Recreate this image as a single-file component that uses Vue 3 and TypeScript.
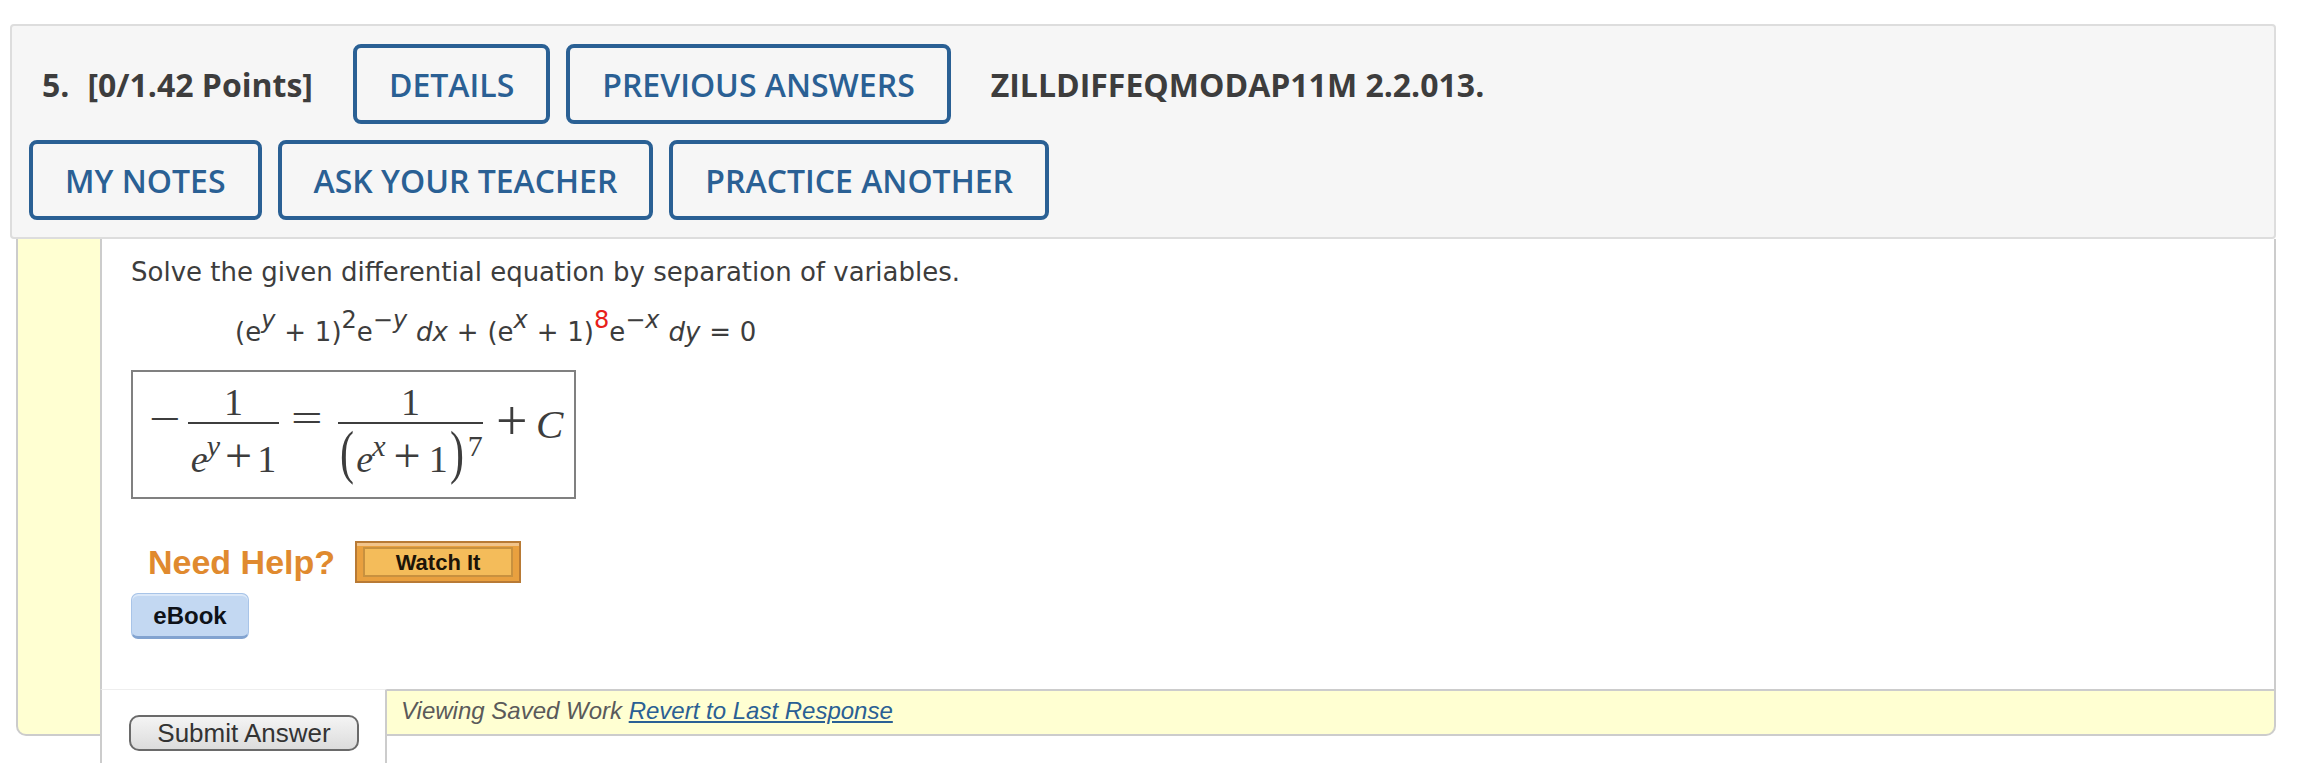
<script setup lang="ts">
const topButtons: string[] = ['DETAILS', 'PREVIOUS ANSWERS']
const bottomButtons: string[] = ['MY NOTES', 'ASK YOUR TEACHER', 'PRACTICE ANOTHER']
</script>

<template>
  <div class="page">
    <header class="head">
      <div class="row">
        <span class="num">5.</span>
        <span class="pts">[0/1.42 Points]</span>
        <button v-for="b in topButtons" :key="b" class="hbtn">{{ b }}</button>
        <span class="code">ZILLDIFFEQMODAP11M 2.2.013.</span>
      </div>
      <div class="row">
        <button v-for="b in bottomButtons" :key="b" class="hbtn">{{ b }}</button>
      </div>
    </header>

    <section class="panel">
      <div class="gutter"></div>
      <div class="main">
        <div class="content">
          <p class="question">Solve the given differential equation by separation of variables.</p>
          <p class="equation">
            (e<sup><i>y</i></sup> + 1)<sup>2</sup>e<sup>−<i>y</i></sup>&nbsp;<i>dx</i> + (e<sup><i>x</i></sup> + 1)<sup class="red">8</sup>e<sup>−<i>x</i></sup>&nbsp;<i>dy</i> = 0
          </p>
          <div class="answer">
            <span class="op minus">−</span>
            <span class="frac f1">
              <span class="n">1</span>
              <span class="d"><i>e</i><sup><i>y</i></sup><span class="plus">+</span>1</span>
            </span>
            <span class="op eq">=</span>
            <span class="frac f2">
              <span class="n">1</span>
              <span class="d"><span class="paren">(</span><i>e</i><sup><i>x</i></sup><span class="plus">+</span>1<span class="paren">)</span><sup class="seven">7</sup></span>
            </span>
            <span class="op plus2">+</span>
            <i class="c">C</i>
          </div>
          <div class="help">
            <span class="need">Need Help?</span>
            <span class="watch"><span class="watch-in">Watch It</span></span>
          </div>
          <span class="ebook">eBook</span>
        </div>
        <div class="foot">
          <div class="cell"><button class="submit">Submit Answer</button></div>
          <div class="status">Viewing Saved Work <a class="link" href="#">Revert to Last Response</a></div>
        </div>
      </div>
    </section>
  </div>
</template>

<style>
html, body { margin: 0; background: #fff; overflow: hidden; }
</style>

<style scoped>
.page {
  height: 764px;
  box-sizing: border-box;
  padding: 24px 32px 0 10px;
  overflow: hidden;
}
.head {
  box-sizing: border-box;
  height: 215px;
  border: 2px solid #ddd;
  border-radius: 4px;
  background: #f6f6f6;
  padding: 18px 17px 0;
  display: flex;
  flex-direction: column;
  gap: 16px;
  font-family: "Open Sans", sans-serif;
}
.row { display: flex; align-items: center; height: 80px; }
.num, .pts, .code { font-weight: 700; font-size: 32px; color: #3d3d3d; white-space: nowrap; }
.num { margin-left: 13px; }
.pts { margin-left: 18px; margin-right: 40px; }
.code { margin-left: 24px; }
.hbtn {
  box-sizing: border-box;
  height: 80px;
  border: 4px solid #2a6094;
  border-radius: 8px;
  background: #f6f6f6;
  color: #2a6094;
  font-family: "Open Sans", sans-serif;
  font-weight: 600;
  font-size: 32px;
  padding: 0 32px;
  margin-right: 16px;
  white-space: nowrap;
}
.panel {
  box-sizing: border-box;
  margin-left: 6px;
  height: 497px;
  display: flex;
  border: 2px solid #ccc;
  border-top: 0;
  border-radius: 0 0 10px 10px;
  background: #ffffd2;
}
.gutter { width: 82px; flex: none; }
.main { flex: 1; display: flex; flex-direction: column; min-width: 0; }
.content {
  flex: 1;
  background: #fff;
  border-left: 2px solid #ccc;
  padding-left: 29px;
  font-family: "DejaVu Sans", sans-serif;
  color: #3d3d3d;
}
.question { margin: 0; padding-top: 16px; font-size: 26px; line-height: 34px; white-space: nowrap; }
.equation {
  margin: 21px 0 0;
  padding-left: 104px;
  font-size: 26px;
  line-height: 44px;
  height: 44px;
  white-space: nowrap;
  word-spacing: 0.6px;
}
.equation sup { font-size: 24px; line-height: 0; vertical-align: 13px; }
.equation .red { color: #e8201a; }
.answer {
  box-sizing: border-box;
  margin-top: 16px;
  width: 445px;
  height: 129px;
  border: 2px solid #808080;
  display: flex;
  align-items: flex-start;
  font-family: "Liberation Serif", serif;
  font-size: 38px;
  color: #3d3d3d;
  padding-left: 16px;
}
.op { font-size: 40px; line-height: 40px; margin-top: 27px; transform-origin: left center; }
.minus { width: 39px; transform: scaleX(1.4); }
.frac { display: flex; flex-direction: column; align-items: center; }
.n {
  display: block;
  width: 100%;
  text-align: center;
  line-height: 60px;
  height: 50px;
  border-bottom: 2px solid #3d3d3d;
}
.d { display: flex; align-items: baseline; line-height: 70px; height: 70px; white-space: nowrap; }
.d sup { font-size: 30px; line-height: 0; position: relative; top: -16px; margin-left: -1px; }
.plus { margin: 0 5px; font-size: 48px; line-height: 0; }
.f1 { width: 91px; }
.eq { width: 47px; margin-left: 12px; transform: scaleX(1.4); }
.f2 { width: 145px; }
.f2 .plus { margin: 0 8px; }
.paren { font-size: 60px; line-height: 0; transform: scaleX(.7); margin: 0 -1px; }
.d .seven { margin-left: 2px; }
.plus2 { margin-left: 13px; margin-top: 29px; width: 40px; font-size: 56px; }
.c { font-size: 41px; line-height: 40px; margin-top: 32px; }
.help { display: flex; align-items: center; margin-top: 42px; padding-left: 17px; height: 42px; }
.need { font-family: "Liberation Sans", sans-serif; font-weight: 700; font-size: 34px; color: #e08a2f; }
.watch {
  box-sizing: border-box;
  margin-left: 20px;
  width: 166px;
  height: 42px;
  border: 2px solid #b87a35;
  background: #e9a03f;
  box-shadow: inset 0 3px 0 #f2c48a;
  display: flex;
  align-items: center;
  justify-content: center;
}
.watch-in {
  box-sizing: border-box;
  width: 150px;
  height: 30px;
  background: #f4bc5a;
  border: 2px solid #c8913f;
  font-family: "Liberation Sans", sans-serif;
  font-weight: 700;
  font-size: 22px;
  line-height: 27px;
  text-align: center;
  color: #1c1408;
}
.ebook {
  box-sizing: border-box;
  display: block;
  margin-top: 10px;
  width: 118px;
  height: 46px;
  border-radius: 7px;
  border: 1px solid #a8c4e8;
  border-bottom: 3px solid #82a3d0;
  background: #c3d8f2;
  box-shadow: inset 0 2px 0 #dbe8f8;
  font-family: "Liberation Sans", sans-serif;
  font-weight: 700;
  font-size: 24px;
  line-height: 43px;
  text-align: center;
  color: #0e1218;
}
.foot { display: flex; height: 45px; flex: none; }
.cell {
  box-sizing: border-box;
  flex: none;
  width: 287px;
  height: 74px;
  background: #fff;
  border-left: 2px solid #ccc;
  border-right: 2px solid #ccc;
  border-top: 1px solid #eee;
  padding: 25px 0 0 27px;
  position: relative;
}
.submit {
  box-sizing: border-box;
  display: block;
  width: 230px;
  height: 36px;
  border: 2px solid #6a6a6a;
  border-radius: 10px;
  background: linear-gradient(#f4f4f4, #dcdcdc);
  font-family: "Liberation Sans", sans-serif;
  font-size: 26px;
  line-height: 30px;
  padding: 0;
  color: #333;
}
.status {
  flex: 1;
  box-sizing: border-box;
  border-top: 2px solid #ccc;
  padding: 5px 0 0 14px;
  font-family: "Liberation Sans", sans-serif;
  font-style: italic;
  font-size: 24px;
  line-height: 30px;
  color: #5a5a5a;
  white-space: nowrap;
}
.link { color: #2a6094; text-decoration: underline; }
</style>
